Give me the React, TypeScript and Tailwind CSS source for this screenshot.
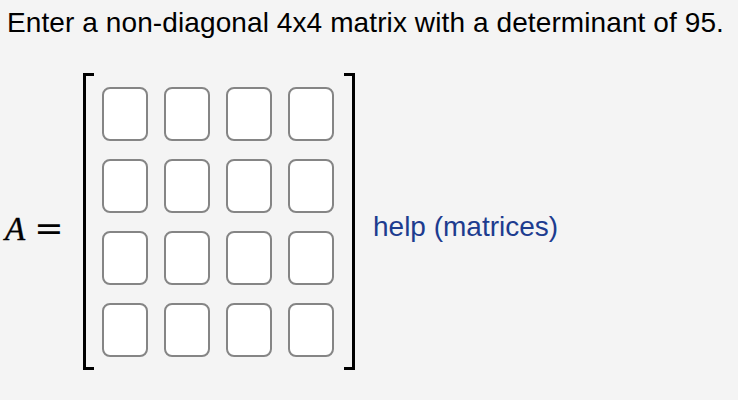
import React from "react";

export default function App() {
  const cells = Array.from({ length: 16 });
  return (
    <div className="w-[738px] h-[400px] bg-[#f4f4f4] overflow-hidden" style={{ fontFamily: '"Liberation Sans", Arial, sans-serif' }}>
      <div className="pl-[7px] pt-[7px] text-[28px] leading-[32px] text-black whitespace-nowrap tracking-[0.1px]">
        Enter a non-diagonal 4x4 matrix with a determinant of 95.
      </div>
      <div className="mt-[34px] flex items-center">
        <div className="flex items-baseline pl-[5px] mt-[14px] w-[83px]" style={{ fontFamily: '"Liberation Serif", "Times New Roman", serif' }}>
          <span className="italic text-[33px] leading-none [-webkit-text-stroke:0.4px_black]">A</span>
          <span className="ml-[9px] text-[35px] leading-none" style={{ fontFamily: '"DejaVu Serif", serif' }}>=</span>
        </div>
        <div className="flex h-[297px]">
          <div className="w-[11px] h-full border-l-[3px] border-t-[3px] border-b-[3px] border-black" />
          <div className="grid grid-cols-[repeat(4,46px)] grid-rows-[repeat(4,54px)] gap-x-[16px] gap-y-[18px] pt-[14px] pl-[8px] pr-[10px]">
            {cells.map((_, i) => (
              <div key={i} className="bg-white border-2 border-[#858585] rounded-[8px]" />
            ))}
          </div>
          <div className="w-[11px] h-full border-r-[3px] border-t-[3px] border-b-[3px] border-black" />
        </div>
        <a className="ml-[18px] mt-[11px] text-[28px] leading-[32px] text-[#1d3c8f] whitespace-nowrap">help (matrices)</a>
      </div>
    </div>
  );
}
